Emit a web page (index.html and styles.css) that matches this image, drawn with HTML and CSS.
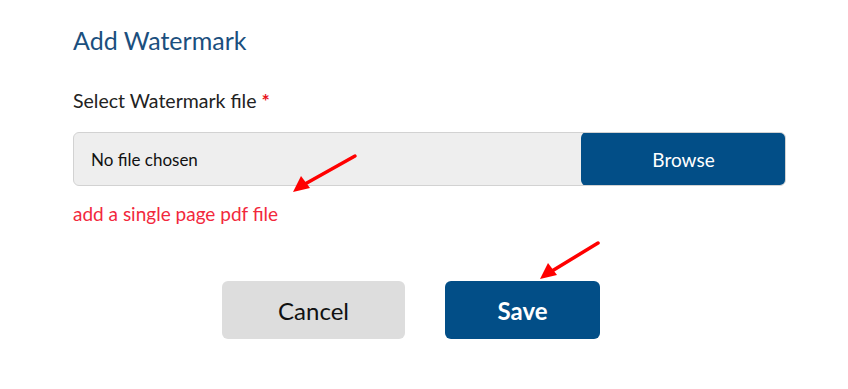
FILE: index.html
```html
<!DOCTYPE html>
<html lang="en">
<head>
    <meta charset="utf-8" />
    <title>Add Watermark</title>
    <link rel="stylesheet" href="styles.css">
</head>
<body>
    <div class="modal">
        <h2 class="modal-title">Add Watermark</h2>

        <label class="field-label" for="wmfile">Select Watermark file <span class="req">*</span></label>
        <div class="file-box">
            <span class="file-name">No file chosen</span>
            <button type="button" class="btn-browse">Browse</button>
        </div>
        <p class="hint">add a single page pdf file</p>

        <div class="actions">
            <button type="button" class="btn btn-cancel">Cancel</button>
            <button type="button" class="btn btn-save">Save</button>
        </div>

        <!-- annotation arrows -->
        <svg class="arrow arrow-file" width="70" height="42" viewBox="0 0 70 42">
            <line x1="64" y1="4" x2="14" y2="32" stroke="#f00" stroke-width="3.5" stroke-linecap="round" />
            <polygon points="2,40 10,24 19,36" fill="#f00" />
        </svg>
        <svg class="arrow arrow-save" width="66" height="42" viewBox="0 0 66 42">
            <line x1="60" y1="4" x2="14" y2="32" stroke="#f00" stroke-width="3.5" stroke-linecap="round" />
            <polygon points="2,40 10,24 19,36" fill="#f00" />
        </svg>
    </div>
</body>
</html>
```

FILE: styles.css
```css
body {
    margin: 0;
    background-color: #fff;
    font-family: Lato, "Open Sans", sans-serif;
    color: #222;
}

.modal {
    position: relative;
    padding: 24px 62px 0 73px;
    width: 713px;
}

.modal-title {
    margin: 0;
    font-size: 25px;
    font-weight: 400;
    color: #1b4f7e;
    line-height: 32px;
}

.field-label {
    display: block;
    margin-top: 33px;
    font-size: 19.5px;
    line-height: 24px;
    color: #222;
}

.req {
    color: #e8141c;
    font-weight: 700;
}

.file-box {
    margin-top: 19px;
    display: flex;
    align-items: center;
    height: 54px;
    background-color: #eeeeee;
    border: 1px solid #d2d2d2;
    border-radius: 6px;
    box-sizing: border-box;
    overflow: hidden;
}

.file-name {
    flex: 1;
    padding-left: 17px;
    font-size: 17px;
    color: #111;
}

.btn-browse {
    width: 205px;
    height: 54px;
    margin: -1px -1px -1px 0;
    border: none;
    border-radius: 6px;
    background-color: #024e87;
    color: #fff;
    font-family: inherit;
    font-size: 19px;
    cursor: pointer;
}

.hint {
    margin: 17px 0 0;
    font-size: 19px;
    line-height: 22px;
    color: #f2283c;
}

.actions {
    display: flex;
    gap: 40px;
    margin-top: 56px;
    padding-left: 149px;
}

.btn {
    height: 58px;
    border: none;
    border-radius: 6px;
    font-family: inherit;
    font-size: 24px;
    cursor: pointer;
}

.btn-cancel {
    width: 183px;
    background-color: #dddddd;
    color: #111;
}

.btn-save {
    width: 155px;
    background-color: #024e87;
    color: #fff;
    font-weight: 700;
}

.arrow {
    position: absolute;
}

.arrow-file {
    left: 291px;
    top: 152px;
}

.arrow-save {
    left: 538px;
    top: 239px;
}
```
